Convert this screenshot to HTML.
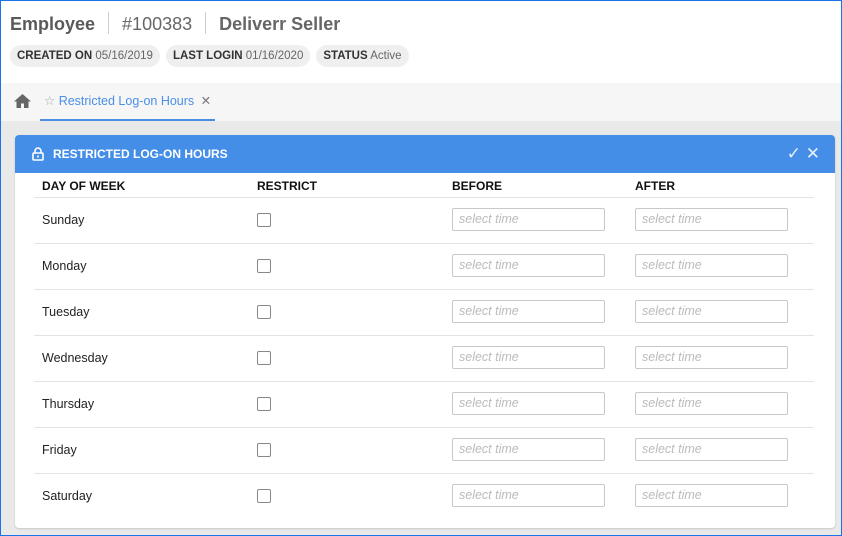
<!DOCTYPE html>
<html><head><style>
*{box-sizing:border-box;margin:0;padding:0}
body{width:842px;height:536px;overflow:hidden;font-family:"Liberation Sans",Arial,sans-serif;background:#e9e9e9;border:1px solid #1a73e8;position:relative}
.top{position:absolute;left:0;top:0;width:840px;height:82px;background:#fff}
.title{position:absolute;top:11px;left:9px;font-size:18px;color:#666;white-space:nowrap}
.title b{color:#5a5a5a}
.sep{display:inline-block;width:1px;height:22px;background:#ccc;vertical-align:-4px;margin:0 13px}
.chips{position:absolute;top:44px;left:9px;display:flex;gap:6px}
.chip{background:#efefef;border-radius:11px;height:22px;line-height:22px;padding:0 7px;font-size:11.5px;color:#666;white-space:nowrap}
.chip b{color:#333}
.tabbar{position:absolute;top:82px;left:0;width:840px;height:38px;background:#f6f6f6}
.tab{position:absolute;left:39px;top:0;width:175px;height:38px;border-bottom:2px solid #4a8fe6;font-size:12.5px;color:#4a8fe6;line-height:36px;padding-left:4px}
.panel{position:absolute;left:14px;top:134px;width:820px;height:393px;background:#fff;border-radius:4px;box-shadow:0 1px 2px rgba(0,0,0,.15)}
.ph{height:38px;background:#448ee8;border-radius:4px 4px 0 0;color:#fff;font-weight:bold;font-size:12px;line-height:38px;padding-left:38px;position:relative}
.row{position:absolute;left:19px;width:780px;border-bottom:1px solid #e3e3e3;font-size:12.5px;color:#222}
.row span{position:absolute}
.hd{font-weight:bold;font-size:12px;color:#111}
.cb{width:14px;height:14px;border:1px solid #888;border-radius:2px}
.in{width:153px;height:23px;border:1px solid #c8c8c8;border-radius:2px;color:#bbb;font-style:italic;font-size:12.5px;line-height:21px;padding-left:6px}
.r{position:absolute;left:33px;width:780px;height:46px;border-bottom:1px solid #e3e3e3;font-size:12.5px;color:#222}
.r .d{position:absolute;left:8px;top:15px}
.r .cb{position:absolute;left:223px;top:15px}
.r .in{position:absolute;top:10px}
</style></head><body>
<div class="top">
<div class="title"><b>Employee</b><span class="sep"></span>#100383<span class="sep"></span><b style="color:#666">Deliverr Seller</b></div>
<div class="chips"><div class="chip"><b>CREATED ON</b> 05/16/2019</div><div class="chip"><b>LAST LOGIN</b> 01/16/2020</div><div class="chip"><b>STATUS</b> Active</div></div>
</div>
<div class="tabbar">
<svg style="position:absolute;left:12px;top:10px" width="19" height="16" viewBox="0 0 19 16"><path d="M9.5 1L1 8.5h2.5V15h4.5v-4.5h3V15h4.5V8.5H18z" fill="#666"/></svg>
<div class="tab"><span style="color:#aaa">☆</span> Restricted Log-on Hours <span style="color:#777;margin-left:3px">✕</span></div>
</div>
<div class="panel">
<div class="ph"><svg style="position:absolute;left:17px;top:12px" width="12" height="14" viewBox="0 0 12 14"><rect x="1" y="6" width="10" height="7" rx="1" fill="none" stroke="#fff" stroke-width="1.6"/><path d="M3 6V4a3 3 0 0 1 6 0v2" fill="none" stroke="#fff" stroke-width="1.6"/><rect x="5.2" y="8.5" width="1.6" height="2" fill="#fff"/></svg>RESTRICTED LOG-ON HOURS
<span style="position:absolute;right:15px;top:0;font-size:17px;font-weight:normal;color:#e8f0fc">✓ ✕</span></div>
<div class="row hd" style="top:38px;height:25px"><span style="left:8px;top:6px">DAY OF WEEK</span><span style="left:223px;top:6px">RESTRICT</span><span style="left:418px;top:6px">BEFORE</span><span style="left:601px;top:6px">AFTER</span></div>
</div>
<div class="r" style="top:197px"><span class="d">Sunday</span><div class="cb"></div><div class="in" style="left:418px">select time</div><div class="in" style="left:601px">select time</div></div>
<div class="r" style="top:243px"><span class="d">Monday</span><div class="cb"></div><div class="in" style="left:418px">select time</div><div class="in" style="left:601px">select time</div></div>
<div class="r" style="top:289px"><span class="d">Tuesday</span><div class="cb"></div><div class="in" style="left:418px">select time</div><div class="in" style="left:601px">select time</div></div>
<div class="r" style="top:335px"><span class="d">Wednesday</span><div class="cb"></div><div class="in" style="left:418px">select time</div><div class="in" style="left:601px">select time</div></div>
<div class="r" style="top:381px"><span class="d">Thursday</span><div class="cb"></div><div class="in" style="left:418px">select time</div><div class="in" style="left:601px">select time</div></div>
<div class="r" style="top:427px"><span class="d">Friday</span><div class="cb"></div><div class="in" style="left:418px">select time</div><div class="in" style="left:601px">select time</div></div>
<div class="r" style="top:473px;border-bottom:none"><span class="d">Saturday</span><div class="cb"></div><div class="in" style="left:418px">select time</div><div class="in" style="left:601px">select time</div></div>
</body></html>
